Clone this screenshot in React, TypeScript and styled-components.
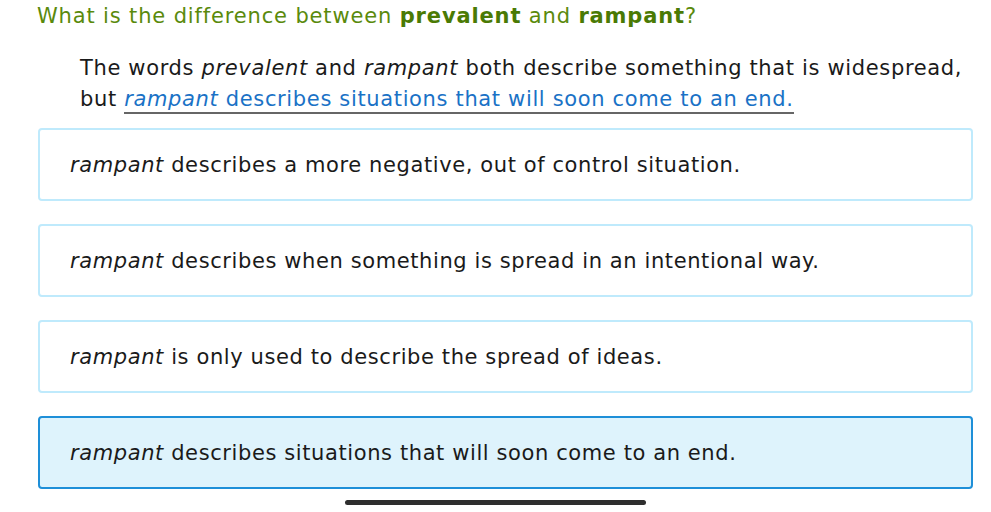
import styled, { createGlobalStyle } from 'styled-components';

const GlobalStyle = createGlobalStyle`
  body {
    margin: 0;
    background: #fff;
    font-family: "DejaVu Sans", Verdana, sans-serif;
    color: #1a1a1a;
  }
`;

const options = [
  'describes a more negative, out of control situation.',
  'describes when something is spread in an intentional way.',
  'is only used to describe the spread of ideas.',
  'describes situations that will soon come to an end.',
];

function App() {
  const selected = 3;
  return (
    <Page>
      <GlobalStyle />
      <Question>
        What is the difference between <b>prevalent</b> and <b>rampant</b>?
      </Question>
      <Prompt>
        The words <i>prevalent</i> and <i>rampant</i> both describe something that is widespread,
        <br />
        but{' '}
        <Answer>
          <i>rampant</i> describes situations that will soon come to an end.
        </Answer>
      </Prompt>
      <Choices>
        {options.map((text, i) => (
          <Choice key={text} $active={i === selected}>
            <span>
              <i>rampant</i> {text}
            </span>
          </Choice>
        ))}
      </Choices>
      <HomeBar />
    </Page>
  );
}
export default App;

const Page = styled.div`
  width: 991px;
  height: 512px;
  overflow: hidden;
  box-sizing: border-box;
  padding-top: 3px;
`;

const Question = styled.h1`
  margin: 0 0 0 37px;
  font-size: 21px;
  letter-spacing: 0.85px;
  font-weight: normal;
  line-height: 26px;
  color: #5a8a0c;

  b {
    color: #4a7a04;
  }
`;

const Prompt = styled.p`
  margin: 24px 0 0 80px;
  font-size: 21px;
  letter-spacing: 0.65px;
  line-height: 31px;
  color: #1a1a1a;
`;

const Answer = styled.span`
  color: #1a72c6;
  border-bottom: 2px solid #666;
  padding-bottom: 1px;
`;

const Choices = styled.div`
  display: flex;
  flex-direction: column;
  gap: 23px;
  margin: 13px 18px 0 38px;
`;

const Choice = styled.div<{ $active: boolean }>`
  box-sizing: border-box;
  height: 73px;
  display: flex;
  align-items: center;
  padding-left: 30px;
  font-size: 21px;
  letter-spacing: 0.6px;
  border: 2px solid ${({ $active }) => ($active ? '#1e8fd8' : '#bfeafc')};
  background: ${({ $active }) => ($active ? '#def3fc' : '#fff')};
  border-radius: 4px;
  color: #1a1a1a;
`;

const HomeBar = styled.div`
  width: 301px;
  height: 5px;
  border-radius: 3px;
  background: #2e2e2e;
  margin: 11px auto 0;
`;
